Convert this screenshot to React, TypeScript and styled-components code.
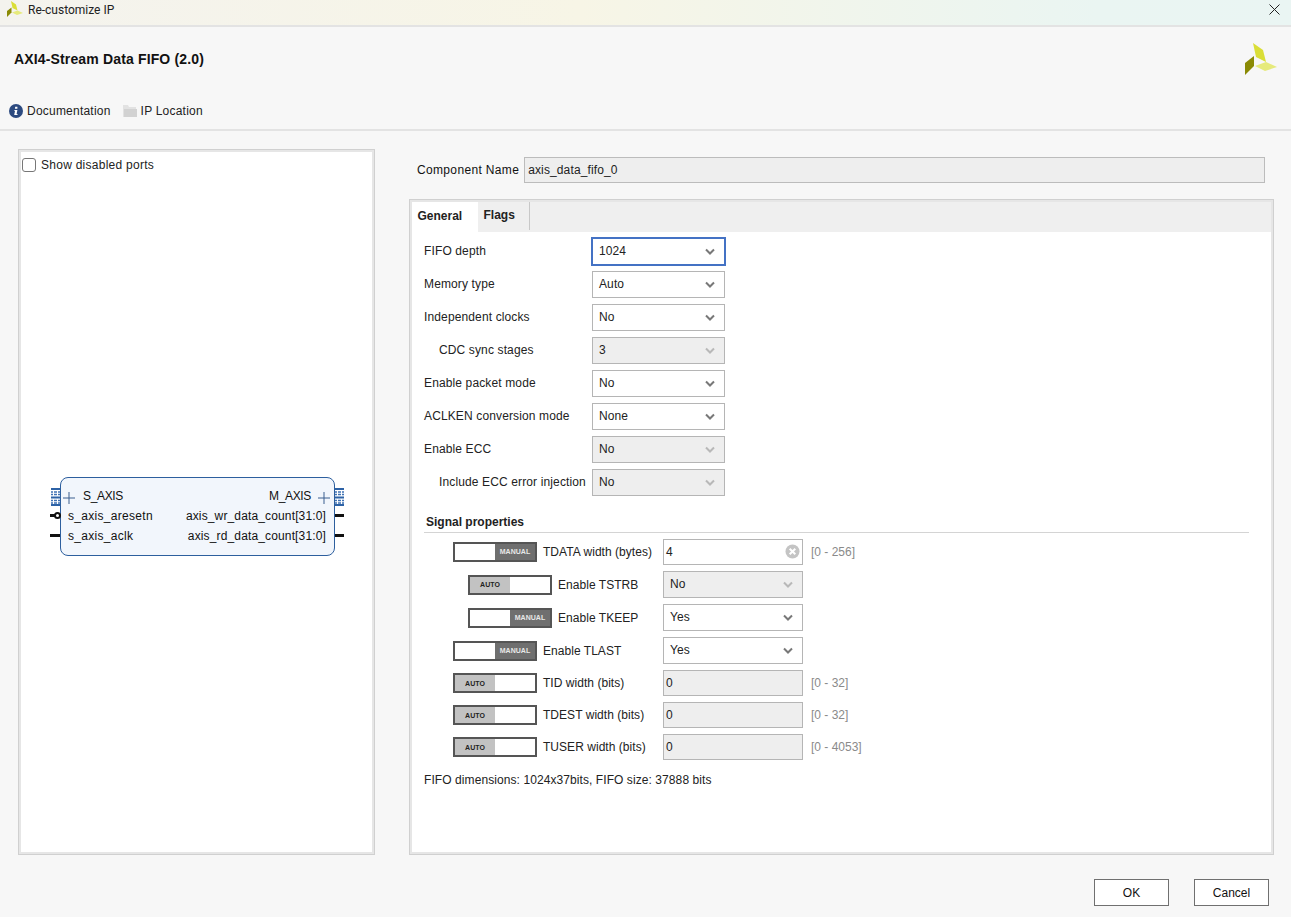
import React from "react";
import styled, { createGlobalStyle } from "styled-components";

const Global = createGlobalStyle`
  html, body { margin: 0; padding: 0; background: #f7f7f7; }
  body { font-family: "Liberation Sans", Arial, sans-serif; font-size: 12px; color: #111; }
  * { box-sizing: border-box; }
`;

const Page = styled.div`
  width: 1291px;
  height: 917px;
  display: flex;
  flex-direction: column;
  background: #f7f7f7;
  overflow: hidden;
`;
const TitleBar = styled.div`
  height: 27px;
  flex: none;
  display: flex;
  align-items: flex-start;
  background: linear-gradient(90deg, #f4f3ee 0%, #f7f5e6 45%, #eaf5f2 85%, #eaf5f3 100%);
  border-bottom: 2px solid #e3e3e3;
  padding: 1px 11px 0 7px;
`;
const TitleText = styled.span`
  font-family: Roboto, "Liberation Sans", sans-serif;
  font-size: 12px;
  line-height: 18px;
  margin-left: 5px;
  color: #222;
  flex: 1;
`;
const CloseIcon = styled.svg`
  width: 11px;
  height: 11px;
  margin-top: 3px;
`;
const Header = styled.div`
  height: 104px;
  flex: none;
  border-bottom: 2px solid #e3e3e3;
  display: flex;
  flex-direction: column;
  position: relative;
`;
const HeaderTop = styled.div`
  height: 62px;
  flex: none;
  display: flex;
  align-items: flex-start;
  justify-content: space-between;
  padding: 16px 14px 0 14px;
`;
const Heading = styled.h1`
  margin: 0;
  font-size: 14px;
  line-height: 32px;
  font-weight: 700;
  letter-spacing: 0.15px;
  color: #111;
`;
const Links = styled.div`
  display: flex;
  align-items: center;
  padding: 15px 0 0 9px;
`;
const LinkItem = styled.span`
  display: inline-flex;
  align-items: center;
  gap: 4px;
  margin-right: 12px;
  font-size: 12px;
  letter-spacing: 0.22px;
  color: #222;
`;
const Main = styled.div`
  flex: 1;
  display: flex;
  gap: 34px;
  padding: 18px 17px 0 18px;
`;
const Preview = styled.div`
  width: 357px;
  height: 706px;
  flex: none;
  background: #fff;
  border: 1px solid #d0d0d0;
  box-shadow: inset 0 0 0 2px #e6e6e6;
  padding: 2px;
  display: flex;
  flex-direction: column;
`;
const CheckRow = styled.label`
  display: flex;
  align-items: center;
  gap: 5px;
  padding: 2px 0 0 1px;
  height: 23px;
  font-size: 12px;
  letter-spacing: 0.26px;
  color: #222;
`;
const CheckBox = styled.span`
  width: 14px;
  height: 14px;
  margin-top: 1px;
  border: 1px solid #777;
  border-radius: 3px;
  background: #fff;
`;
const Block = styled.div`
  position: relative;
  width: 275px;
  height: 79px;
  margin: 302px 0 0 39px;
  border: 1px solid #2d5f9e;
  border-radius: 8px;
  background: #f2f6fc;
  padding: 8px 8px 0 7px;
  font-size: 12px;
  color: #111;
`;
const BlockRow = styled.div`
  height: 20px;
  display: flex;
  align-items: center;
  justify-content: space-between;
  white-space: nowrap;
`;
const BusName = styled.span<{ $side: string }>`
  letter-spacing: -0.35px;
  margin: ${(p) => (p.$side === "left" ? "0 0 0 15px" : "0 15px 0 0")};
`;
const PortLeft = styled.span`
  letter-spacing: 0.3px;
`;
const PortRight = styled.span`
  letter-spacing: 0.14px;
`;
const Marker = styled.span<{ $x: number; $y: number }>`
  position: absolute;
  left: ${(p) => p.$x}px;
  top: ${(p) => p.$y}px;
  line-height: 0;
`;
const Right = styled.div`
  width: 865px;
  flex: none;
  margin-top: 1px;
  display: flex;
  flex-direction: column;
`;
const NameRow = styled.div`
  height: 26px;
  margin-top: 7px;
  display: flex;
  align-items: center;
  padding: 0 9px 0 8px;
  gap: 5px;
  font-size: 12px;
  letter-spacing: 0.34px;
`;
const NameInput = styled.div`
  flex: 1;
  height: 26px;
  border: 1px solid #bcbcbc;
  background: #eeeeee;
  display: flex;
  align-items: center;
  padding-left: 3px;
  letter-spacing: 0.13px;
  color: #222;
`;
const TabPanel = styled.div`
  margin-top: 16px;
  height: 656px;
  border: 1px solid #d0d0d0;
  box-shadow: inset 0 0 0 2px #e6e6e6;
  padding: 2px;
  background: #fff;
  display: flex;
  flex-direction: column;
`;
const TabStrip = styled.div`
  height: 30px;
  flex: none;
  background: #efefef;
  display: flex;
`;
const Tab = styled.div<{ $active?: boolean }>`
  display: flex;
  align-items: center;
  padding: 0 5.5px 2px;
  font-size: 12px;
  font-weight: 700;
  color: #222;
  background: ${(p) => (p.$active ? "#fff" : "transparent")};
  width: ${(p) => (p.$active ? "66px" : "52px")};
  border-right: ${(p) => (p.$active ? "none" : "1px solid #c8c8c8")};
  margin-bottom: ${(p) => (p.$active ? "0" : "2px")};
`;
const Form = styled.div`
  padding: 3px 12px 0;
  display: flex;
  flex-direction: column;
`;
const FieldRow = styled.div`
  height: 33px;
  display: flex;
  align-items: center;
`;
const FieldLabel = styled.span<{ $indent?: boolean }>`
  width: 168px;
  padding: 0 0 1px ${(p) => (p.$indent ? "15px" : "0")};
  font-size: 12px;
  letter-spacing: 0.13px;
  color: #222;
  white-space: nowrap;
`;
const Select = styled.div<{ $w: number; $disabled?: boolean; $focus?: boolean }>`
  width: ${(p) => p.$w}px;
  height: 27px;
  flex: none;
  display: flex;
  align-items: center;
  justify-content: space-between;
  padding: 0 9px 0 6px;
  font-size: 12px;
  color: #222;
  background: ${(p) => (p.$disabled ? "#eeeeee" : "#fff")};
  border: 1px solid #b5b5b5;
  ${(p) => (p.$focus ? "outline: 2px solid #4472c4; outline-offset: -1px;" : "")}
`;
const SelectValue = styled.span`
  margin-top: -1px;
  letter-spacing: 0.1px;
`;
const SectionTitle = styled.div`
  margin: 15px 0 0;
  padding: 0 0 3px 2px;
  height: 19px;
  width: 825px;
  font-size: 12px;
  line-height: 16px;
  font-weight: 700;
  color: #222;
  border-bottom: 1px solid #d4d4d4;
`;
const SignalList = styled.div`
  margin-top: 2px;
  display: flex;
  flex-direction: column;
`;
const SignalRow = styled.div<{ $h: number }>`
  height: ${(p) => p.$h}px;
  display: flex;
  align-items: center;
`;
const SignalLeft = styled.div<{ $indent: number }>`
  width: 239px;
  flex: none;
  display: flex;
  align-items: center;
  gap: 6px;
  padding-left: ${(p) => p.$indent}px;
  font-size: 12px;
  letter-spacing: 0.04px;
  color: #222;
  white-space: nowrap;
`;
const Toggle = styled.div<{ $manual: boolean }>`
  width: 84px;
  height: 20px;
  flex: none;
  border: 2px solid #555;
  display: flex;
  flex-direction: ${(p) => (p.$manual ? "row-reverse" : "row")};
  background: #fff;
`;
const ToggleKnob = styled.div<{ $manual: boolean }>`
  width: 40px;
  height: 100%;
  background: ${(p) => (p.$manual ? "#6f6f6f" : "#c2c2c2")};
  color: ${(p) => (p.$manual ? "#e8e8e8" : "#222")};
  font-size: 7px;
  font-weight: 700;
  display: flex;
  align-items: center;
  justify-content: center;
`;
const TextField = styled.div<{ $disabled?: boolean }>`
  width: 140px;
  height: 26px;
  flex: none;
  border: 1px solid #b5b5b5;
  background: ${(p) => (p.$disabled ? "#eeeeee" : "#fff")};
  display: flex;
  align-items: center;
  justify-content: space-between;
  padding: 0 2px 0 2px;
  font-size: 12px;
  color: #222;
`;
const Range = styled.span`
  margin-left: 8px;
  font-size: 12px;
  color: #8a8a8a;
`;
const Summary = styled.div`
  margin-top: 10px;
  font-size: 12px;
  letter-spacing: 0.08px;
  color: #222;
`;
const Footer = styled.div`
  display: flex;
  justify-content: flex-end;
  gap: 25px;
  padding: 0 22px 11px 0;
`;
const Button = styled.button`
  width: 75px;
  height: 27px;
  background: #fff;
  border: 1px solid #707070;
  font: 12px "Liberation Sans", Arial, sans-serif;
  color: #111;
  padding: 0;
`;

const Logo = ({ size }: { size: number }) => (
  <svg width={size} height={size} viewBox="0 0 32 32" style={{ flex: "none" }}>
    <polygon points="8,0 18,7 21,19 11,14" fill="#dade37" />
    <polygon points="21,19 32,24 20,28 10,23" fill="#e6ea7c" />
    <polygon points="9,13 9,23 0,32 0,20" fill="#8a8a05" />
  </svg>
);
const Chevron = ({ disabled }: { disabled?: boolean }) => (
  <svg width="10" height="7" viewBox="0 0 10 7">
    <path d="M1 1.5 5 5.5l4-4" fill="none" stroke={disabled ? "#b8b8b8" : "#787878"} strokeWidth="2" />
  </svg>
);
const Plus = () => (
  <svg width="12" height="12" viewBox="0 0 12 12">
    <path d="M6 0v12M0 6h12" stroke="#3a5f8f" strokeWidth="1" />
  </svg>
);
const Bus = () => (
  <svg width="9" height="18" viewBox="0 0 9 18">
    <path d="M0 1h9M0 9.5h9M0 17h9" stroke="#2d62a6" strokeWidth="2" />
    <path d="M0 4h2M3 4h3M7 4h2M0 6.5h2M3 6.5h3M7 6.5h2M0 12.5h2M3 12.5h3M7 12.5h2M0 15h2M3 15h3M7 15h2" stroke="#3f72b4" strokeWidth="1.4" />
  </svg>
);

type Signal = {
  label: string;
  manual: boolean;
  indent: number;
  h: number;
  kind: "text" | "select";
  value: string;
  disabled?: boolean;
  clear?: boolean;
  range?: string;
};
const signals: Signal[] = [
  { label: "TDATA width (bytes)", manual: true, indent: 29, h: 33, kind: "text", value: "4", clear: true, range: "[0 - 256]" },
  { label: "Enable TSTRB", manual: false, indent: 44, h: 33, kind: "select", value: "No", disabled: true },
  { label: "Enable TKEEP", manual: true, indent: 44, h: 33, kind: "select", value: "Yes" },
  { label: "Enable TLAST", manual: true, indent: 29, h: 33, kind: "select", value: "Yes" },
  { label: "TID width (bits)", manual: false, indent: 29, h: 32, kind: "text", value: "0", disabled: true, range: "[0 - 32]" },
  { label: "TDEST width (bits)", manual: false, indent: 29, h: 32, kind: "text", value: "0", disabled: true, range: "[0 - 32]" },
  { label: "TUSER width (bits)", manual: false, indent: 29, h: 32, kind: "text", value: "0", disabled: true, range: "[0 - 4053]" },
];
const fields = [
  { label: "FIFO depth", value: "1024", focus: true },
  { label: "Memory type", value: "Auto" },
  { label: "Independent clocks", value: "No" },
  { label: "CDC sync stages", value: "3", indent: true, disabled: true },
  { label: "Enable packet mode", value: "No" },
  { label: "ACLKEN conversion mode", value: "None" },
  { label: "Enable ECC", value: "No", disabled: true },
  { label: "Include ECC error injection", value: "No", indent: true, disabled: true },
];

export default function App() {
  return (
    <Page>
      <Global />
      <TitleBar>
        <Logo size={16} />
        <TitleText>Re-customize IP</TitleText>
        <CloseIcon viewBox="0 0 11 11">
          <path d="M.5.5l10 10M10.5.5l-10 10" stroke="#222" strokeWidth="1" />
        </CloseIcon>
      </TitleBar>
      <Header>
        <HeaderTop>
          <Heading>AXI4-Stream Data FIFO (2.0)</Heading>
          <Logo size={32} />
        </HeaderTop>
        <Links>
          <LinkItem>
            <svg width="14" height="14" viewBox="0 0 14 14">
              <circle cx="7" cy="7" r="7" fill="#2c4a80" />
              <path d="M6.2 2.8h2.2v2H5.9zM5.5 6h2.9l-.8 4h.9v1H5.2l.8-4h-.7z" fill="#fff" />
            </svg>
            Documentation
          </LinkItem>
          <LinkItem>
            <svg width="14" height="12" viewBox="0 0 14 12">
              <path d="M0 0h5l1 2h7v10H0z" fill="#e2e2e2" />
              <path d="M1 4h13v8H1z" fill="#d2d2d2" />
            </svg>
            IP Location
          </LinkItem>
        </Links>
      </Header>
      <Main>
        <Preview>
          <CheckRow>
            <CheckBox />
            Show disabled ports
          </CheckRow>
          <Block>
            <BlockRow>
              <BusName $side="left">S_AXIS</BusName>
              <BusName $side="right">M_AXIS</BusName>
            </BlockRow>
            <BlockRow>
              <PortLeft>s_axis_aresetn</PortLeft>
              <PortRight>axis_wr_data_count[31:0]</PortRight>
            </BlockRow>
            <BlockRow>
              <PortLeft>s_axis_aclk</PortLeft>
              <PortRight>axis_rd_data_count[31:0]</PortRight>
            </BlockRow>
            <Marker $x={2} $y={14}><Plus /></Marker>
            <Marker $x={257} $y={14}><Plus /></Marker>
            <Marker $x={-10} $y={10}><Bus /></Marker>
            <Marker $x={274} $y={10}><Bus /></Marker>
            <Marker $x={-11} $y={34}>
              <svg width="12" height="8" viewBox="0 0 12 8">
                <path d="M0 3.5h6" stroke="#111" strokeWidth="3" />
                <circle cx="7.5" cy="3.5" r="2.5" fill="#fff" stroke="#111" strokeWidth="2" />
              </svg>
            </Marker>
            <Marker $x={-11} $y={54}>
              <svg width="11" height="8" viewBox="0 0 11 8">
                <path d="M0 3.5h10" stroke="#111" strokeWidth="3" />
              </svg>
            </Marker>
            <Marker $x={274} $y={34}>
              <svg width="9" height="8" viewBox="0 0 9 8">
                <path d="M0 3.5h9" stroke="#111" strokeWidth="3" />
              </svg>
            </Marker>
            <Marker $x={274} $y={54}>
              <svg width="9" height="8" viewBox="0 0 9 8">
                <path d="M0 3.5h9" stroke="#111" strokeWidth="3" />
              </svg>
            </Marker>
          </Block>
        </Preview>
        <Right>
          <NameRow>
            Component Name
            <NameInput>axis_data_fifo_0</NameInput>
          </NameRow>
          <TabPanel>
            <TabStrip>
              <Tab $active>General</Tab>
              <Tab>Flags</Tab>
            </TabStrip>
            <Form>
              {fields.map((f) => (
                <FieldRow key={f.label}>
                  <FieldLabel $indent={f.indent}>{f.label}</FieldLabel>
                  <Select $w={133} $disabled={f.disabled} $focus={f.focus}>
                    <SelectValue>{f.value}</SelectValue>
                    <Chevron disabled={f.disabled} />
                  </Select>
                </FieldRow>
              ))}
              <SectionTitle>Signal properties</SectionTitle>
              <SignalList>
                {signals.map((s) => (
                  <SignalRow key={s.label} $h={s.h}>
                    <SignalLeft $indent={s.indent}>
                      <Toggle $manual={s.manual}>
                        <ToggleKnob $manual={s.manual}>{s.manual ? "MANUAL" : "AUTO"}</ToggleKnob>
                      </Toggle>
                      {s.label}
                    </SignalLeft>
                    {s.kind === "text" ? (
                      <TextField $disabled={s.disabled}>
                        {s.value}
                        {s.clear && (
                          <svg width="15" height="15" viewBox="0 0 15 15">
                            <circle cx="7.5" cy="7.5" r="7" fill="#c4c4c4" />
                            <path d="M4.7 4.7l5.6 5.6M10.3 4.7l-5.6 5.6" stroke="#fff" strokeWidth="2" />
                          </svg>
                        )}
                      </TextField>
                    ) : (
                      <Select $w={140} $disabled={s.disabled}>
                        <SelectValue>{s.value}</SelectValue>
                        <Chevron disabled={s.disabled} />
                      </Select>
                    )}
                    {s.range && <Range>{s.range}</Range>}
                  </SignalRow>
                ))}
              </SignalList>
              <Summary>FIFO dimensions: 1024x37bits, FIFO size: 37888 bits</Summary>
            </Form>
          </TabPanel>
        </Right>
      </Main>
      <Footer>
        <Button>OK</Button>
        <Button>Cancel</Button>
      </Footer>
    </Page>
  );
}
